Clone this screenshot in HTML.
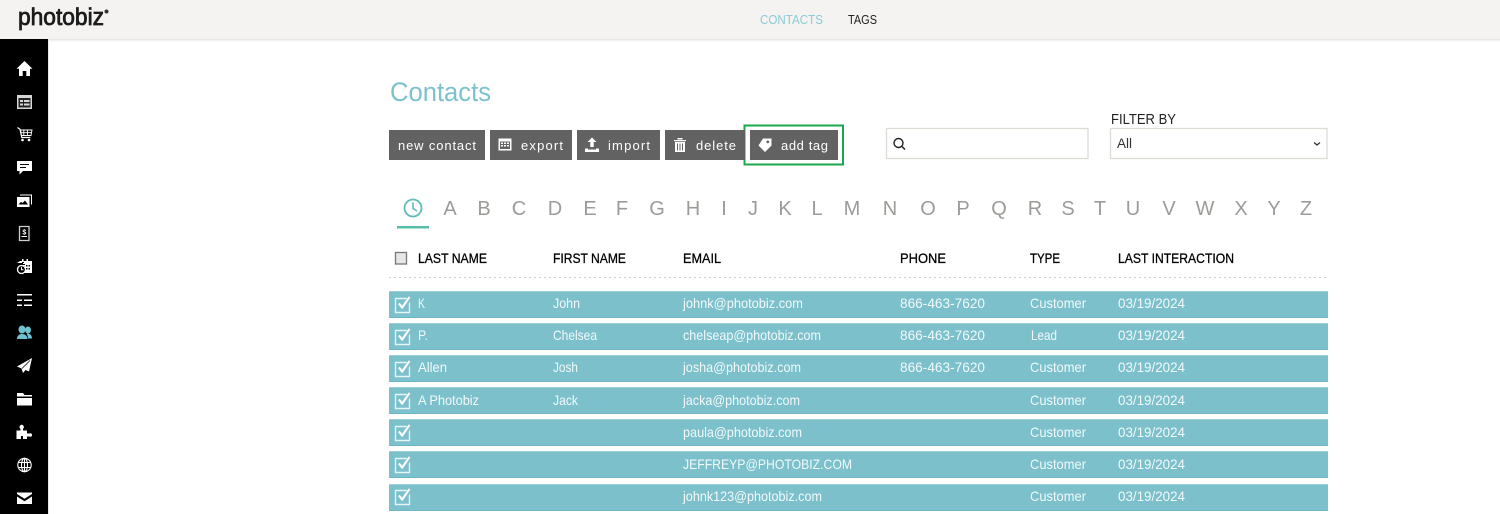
<!DOCTYPE html>
<html><head><meta charset="utf-8"><title>Contacts</title>
<style>
html,body{margin:0;padding:0;background:#fff;width:1500px;height:514px;overflow:hidden}
svg{display:block}
text{font-family:"Liberation Sans",sans-serif}
.r{font-size:13.8px;fill:#f2fafb}
.h{font-size:14.2px;fill:#000;stroke:#000;stroke-width:.3}
.b{font-size:13px;fill:#fff}
.a{font-size:20px;fill:#9b9b98;text-anchor:middle}
.i{fill:#fff}
.s{fill:none;stroke:#fff;stroke-width:1.4}
</style></head><body>
<svg width="1500" height="514" viewBox="0 0 1500 514" xmlns="http://www.w3.org/2000/svg">
<defs>
<linearGradient id="sh" x1="0" x2="0" y1="0" y2="1"><stop offset="0" stop-color="#e2e2e0"/><stop offset="1" stop-color="#fff"/></linearGradient>
<g id="ck"><path d="M409.500 302.500v10h-14v-14h11" fill="none" stroke="#e6f4f6" stroke-width="1.400"/><path d="M398.800 303.500l3.400 4 7.300-10.500" fill="none" stroke="#fff" stroke-width="2.200"/></g>
<g id="row"><rect x="389" y="291" width="939" height="27" fill="#7bc0cb"/><rect x="389" y="291" width="939" height="1" fill="#9bd0d8"/><rect x="389" y="317" width="939" height="1" fill="#70b6c2"/></g>
</defs>
<rect width="1500" height="39" fill="#f4f3f1"/>
<rect y="39" width="1500" height="3" fill="url(#sh)"/>
<rect y="39" width="48" height="475" fill="#000"/>
<rect x="48" y="39" width="1" height="475" fill="#e8e8e8"/>
<text x="18" y="25" font-size="24" fill="#1c1c1c" stroke="#1c1c1c" stroke-width=".8" textLength="86" lengthAdjust="spacingAndGlyphs">photobiz</text>
<circle cx="106.500" cy="11.500" r="2" fill="#333"/>
<text x="760" y="24" font-size="13" fill="#8acbd5" textLength="63" lengthAdjust="spacingAndGlyphs">CONTACTS</text>
<text x="848" y="24" font-size="13" fill="#222" textLength="29" lengthAdjust="spacingAndGlyphs">TAGS</text>

<!-- sidebar icons -->
<path class="i" d="M24.500 61l8 7.800h-2.500V76h-3.700v-5h-3.600v5H19v-7.200h-2.500z"/>
<path d="M17 95h15v14H17z" fill="#d8d8d8"/><path d="M18.500 98h12v9.500h-12z" fill="#222"/><path d="M20 100h3v2h-3zM20 103.500h3v2h-3zM24 100h5.500v2H24zM24 103.500h5.500v2H24z" fill="#d8d8d8"/>
<g fill="none" stroke="#fff"><path d="M17.500 127.500l2.500 1.800 1.800 8.200h8.500" stroke-width="1.200"/><path d="M20.500 130h11.500l-1 5.500h-9.500zM23.800 130v5.500M27.500 130v5.500M20.800 132.700h10.700" stroke-width=".9"/></g><circle class="i" cx="22.500" cy="140" r="1.300"/><circle class="i" cx="29" cy="140" r="1.300"/>
<path class="i" d="M17 161h15v10h-9l-3.500 3.500V171H17zM20 164v1h9v-1zM20 167v1h6v-1z" fill-rule="evenodd"/>
<path class="i" d="M20 194.500h12v10h-1v-9H20z"/><path class="i" d="M17 197h12.500v10H17zM18.500 204.500h9.500l-3-4-2.500 2.500-1.500-1.300z" fill-rule="evenodd"/>
<path d="M19.500 226.500h9.500v14h-9.500z" fill="none" stroke="#cfcfcf" stroke-width="1.300"/><text x="24.300" y="234.500" font-size="7" font-weight="700" fill="#fff" text-anchor="middle">$</text><path class="i" d="M21.500 236h5.500v1h-5.500z"/>
<path class="i" d="M20 261h2v-2h1.500v2h3v-2H28v2h4v12h-8v-1h-1v-2h1v-1h-2v-1h1v-1h2v-1h-2v-1h2v-1h-2v-1h1v-1h-2v1h-5z"/><path d="M26 265h1.500v1.500H26zM28.500 265H30v1.500h-1.500zM26 268h1.500v1.500H26zM28.500 268H30v1.500h-1.500z" fill="#000"/><circle cx="21.500" cy="269.500" r="4" fill="#000" stroke="#fff" stroke-width="1.300"/><path d="M21.500 267v2.700h2" stroke="#fff" fill="none"/>
<path class="i" d="M17 294h15v1.500H17zM17 299.500h5v1.500h-5zM24 299.500h8v1.500h-8zM17 304.500h5v1.500h-5zM24 304.500h8v1.500h-8z"/>
<ellipse cx="22" cy="329.500" rx="3.500" ry="4" fill="#6fc3d0"/><ellipse cx="28" cy="330" rx="3" ry="3.500" fill="#6fc3d0"/><path d="M17 339c0-3.800 2.500-5 5-5s5.500 1.200 5.500 5zM28 338.500c0-2-.5-3.300-1.500-4.700 3-.6 5.500 1 5.500 4.700z" fill="#6fc3d0"/>
<path class="i" d="M32 358L17 366.500l4.500 2L23 373l2.500-3 3.500 1.500z"/><path d="M30 360.500L22 368.500" stroke="#000" stroke-width=".8"/>
<path class="i" d="M17 393h6l1.500 2H32v1.500H17zM17 398h15v7.500H17z"/>
<circle class="i" cx="21.700" cy="427" r="2.200"/><circle class="i" cx="30.200" cy="435" r="1.800"/><path class="i" d="M20.500 428h2.500v2.500h4v3h2v3h-2v2.500h-4v-3h-2v3H16.500v-8.500h4z"/>
<g fill="none" stroke="#fff" stroke-width="1.100"><circle cx="24.500" cy="465" r="6.700"/><ellipse cx="24.500" cy="465" rx="3" ry="6.700"/><path d="M24.500 458v14M18 462.500h13M18 467.500h13"/></g>
<path class="i" d="M17 492.500h15v1.500l-7.500 4.800L17 494zM17 496.500l7.500 4.800 7.500-4.800v7.500H17z"/>

<text x="390" y="101" font-size="26.500" fill="#7cc2cd" textLength="101" lengthAdjust="spacingAndGlyphs">Contacts</text>

<!-- buttons -->
<rect x="744.500" y="125.500" width="98.500" height="39" fill="#fff" stroke="#1aa84b" stroke-width="2"/>
<g fill="#626262"><rect x="389" y="130" width="96" height="30"/><rect x="490" y="130" width="82" height="30"/><rect x="577" y="130" width="83" height="30"/><rect x="665" y="130" width="80" height="30"/><rect x="750" y="130" width="88" height="30"/></g>
<text class="b" x="398" y="150" textLength="78" lengthAdjust="spacing">new contact</text>
<text class="b" x="521" y="150" textLength="42" lengthAdjust="spacing">export</text>
<text class="b" x="608" y="150" textLength="42" lengthAdjust="spacing">import</text>
<text class="b" x="696" y="150" textLength="40" lengthAdjust="spacing">delete</text>
<text class="b" x="781" y="150" textLength="47" lengthAdjust="spacing">add tag</text>
<path class="i" d="M498.500 138.500h13v12h-13zM500 141.500v7.500h10v-7.500zM501 142.500h2v1.500h-2zM504 142.500h2v1.500h-2zM507 142.500h2v1.500h-2zM501 145h2v1.500h-2zM504 145h2v1.500h-2zM507 145h2v1.500h-2z" fill-rule="evenodd"/>
<path class="i" d="M592 137.500l4.500 4.500h-2.800v5h-3.400v-5h-2.800zM585 148.500h3v1h8v-1h3v3.500h-14z"/>
<path class="i" d="M674 140h12v1.300h-12zM677.500 138h5v1.500h-5zM675 142h10v10h-10zM677 143.500v7h1v-7zM679.500 143.500v7h1v-7zM682 143.500v7h1v-7z" fill-rule="evenodd"/>
<path class="i" d="M763 138.500h8.500v7l-6.500 6.500-6.500-6.500zM767.800 140.500a1.400 1.400 0 1 0 .01 0z" fill-rule="evenodd"/>

<!-- search/filter -->
<rect x="886.500" y="128.500" width="201.500" height="30" fill="#fff" stroke="#dcdcd7" stroke-width="1.300"/>
<circle cx="898.500" cy="143" r="4.500" fill="none" stroke="#222" stroke-width="1.400"/><path d="M902 146.500l3 3" stroke="#222" stroke-width="1.500"/>
<text x="1111" y="124" font-size="15" fill="#222" textLength="65" lengthAdjust="spacingAndGlyphs">FILTER BY</text>
<rect x="1110.500" y="128.500" width="216.500" height="30" fill="#fff" stroke="#dcdcd7" stroke-width="1.300"/>
<text x="1117" y="148" font-size="13.500" fill="#333" textLength="15" lengthAdjust="spacingAndGlyphs">All</text>
<path d="M1314 142.500l3 2.500 3-2.500" fill="none" stroke="#333" stroke-width="1.300"/>

<!-- alphabet -->
<circle cx="413" cy="208" r="8.500" fill="none" stroke="#5bbdb5" stroke-width="1.800"/><path d="M413 202.500v6l4 2.500" fill="none" stroke="#5bbdb5" stroke-width="1.600"/>
<rect x="397" y="226" width="32" height="2.500" fill="#56bfa9"/>
<g class="a">
<text class="a" x="450" y="215">A</text><text class="a" x="484" y="215">B</text><text class="a" x="519" y="215">C</text><text class="a" x="555" y="215">D</text><text class="a" x="590" y="215">E</text><text class="a" x="622" y="215">F</text><text class="a" x="657" y="215">G</text><text class="a" x="693" y="215">H</text><text class="a" x="724" y="215">I</text><text class="a" x="753" y="215">J</text><text class="a" x="785" y="215">K</text><text class="a" x="817" y="215">L</text><text class="a" x="852" y="215">M</text><text class="a" x="890" y="215">N</text><text class="a" x="928" y="215">O</text><text class="a" x="963" y="215">P</text><text class="a" x="999" y="215">Q</text><text class="a" x="1035" y="215">R</text><text class="a" x="1068" y="215">S</text><text class="a" x="1100" y="215">T</text><text class="a" x="1133" y="215">U</text><text class="a" x="1169" y="215">V</text><text class="a" x="1205" y="215">W</text><text class="a" x="1241" y="215">X</text><text class="a" x="1274" y="215">Y</text><text class="a" x="1306" y="215">Z</text>
</g>

<!-- header -->
<rect x="395.500" y="252.500" width="11" height="11.500" fill="#e6e6e6" stroke="#777" stroke-width="1.300"/>
<text class="h" x="418" y="263" textLength="69" lengthAdjust="spacingAndGlyphs">LAST NAME</text>
<text class="h" x="553" y="263" textLength="73" lengthAdjust="spacingAndGlyphs">FIRST NAME</text>
<text class="h" x="683" y="263" textLength="38" lengthAdjust="spacingAndGlyphs">EMAIL</text>
<text class="h" x="900" y="263" textLength="46" lengthAdjust="spacingAndGlyphs">PHONE</text>
<text class="h" x="1030" y="263" textLength="30" lengthAdjust="spacingAndGlyphs">TYPE</text>
<text class="h" x="1118" y="263" textLength="116" lengthAdjust="spacingAndGlyphs">LAST INTERACTION</text>
<path d="M389 277.500H1328" stroke="#cfcfcf" stroke-dasharray="2 3"/>

<!-- rows -->
<use href="#row"/><use href="#row" y="32"/><use href="#row" y="64"/><use href="#row" y="96"/><use href="#row" y="128"/><use href="#row" y="160"/><use href="#row" y="193"/>
<use href="#ck"/><use href="#ck" y="32"/><use href="#ck" y="64"/><use href="#ck" y="96"/><use href="#ck" y="128"/><use href="#ck" y="160"/><use href="#ck" y="192"/>

<text class="r" x="418" y="308" textLength="7" lengthAdjust="spacingAndGlyphs">K</text>
<text class="r" x="553" y="308" textLength="27" lengthAdjust="spacingAndGlyphs">John</text>
<text class="r" x="683" y="308" textLength="120" lengthAdjust="spacingAndGlyphs">johnk@photobiz.com</text>
<text class="r" x="900" y="308" textLength="85" lengthAdjust="spacingAndGlyphs">866-463-7620</text>
<text class="r" x="1030" y="308" textLength="56" lengthAdjust="spacingAndGlyphs">Customer</text>
<text class="r" x="1118" y="308" textLength="67" lengthAdjust="spacingAndGlyphs">03/19/2024</text>

<text class="r" x="418" y="340" textLength="10" lengthAdjust="spacingAndGlyphs">P.</text>
<text class="r" x="553" y="340" textLength="44" lengthAdjust="spacingAndGlyphs">Chelsea</text>
<text class="r" x="683" y="340" textLength="138" lengthAdjust="spacingAndGlyphs">chelseap@photobiz.com</text>
<text class="r" x="900" y="340" textLength="85" lengthAdjust="spacingAndGlyphs">866-463-7620</text>
<text class="r" x="1031" y="340" textLength="26" lengthAdjust="spacingAndGlyphs">Lead</text>
<text class="r" x="1118" y="340" textLength="67" lengthAdjust="spacingAndGlyphs">03/19/2024</text>

<text class="r" x="418" y="372" textLength="29" lengthAdjust="spacingAndGlyphs">Allen</text>
<text class="r" x="553" y="372" textLength="25" lengthAdjust="spacingAndGlyphs">Josh</text>
<text class="r" x="683" y="372" textLength="118" lengthAdjust="spacingAndGlyphs">josha@photobiz.com</text>
<text class="r" x="900" y="372" textLength="85" lengthAdjust="spacingAndGlyphs">866-463-7620</text>
<text class="r" x="1030" y="372" textLength="56" lengthAdjust="spacingAndGlyphs">Customer</text>
<text class="r" x="1118" y="372" textLength="67" lengthAdjust="spacingAndGlyphs">03/19/2024</text>

<text class="r" x="418" y="405" textLength="61" lengthAdjust="spacingAndGlyphs">A Photobiz</text>
<text class="r" x="553" y="405" textLength="25" lengthAdjust="spacingAndGlyphs">Jack</text>
<text class="r" x="683" y="405" textLength="117" lengthAdjust="spacingAndGlyphs">jacka@photobiz.com</text>
<text class="r" x="1030" y="405" textLength="56" lengthAdjust="spacingAndGlyphs">Customer</text>
<text class="r" x="1118" y="405" textLength="67" lengthAdjust="spacingAndGlyphs">03/19/2024</text>

<text class="r" x="683" y="437" textLength="119" lengthAdjust="spacingAndGlyphs">paula@photobiz.com</text>
<text class="r" x="1030" y="437" textLength="56" lengthAdjust="spacingAndGlyphs">Customer</text>
<text class="r" x="1118" y="437" textLength="67" lengthAdjust="spacingAndGlyphs">03/19/2024</text>

<text class="r" x="683" y="469" textLength="169" lengthAdjust="spacingAndGlyphs">JEFFREYP@PHOTOBIZ.COM</text>
<text class="r" x="1030" y="469" textLength="56" lengthAdjust="spacingAndGlyphs">Customer</text>
<text class="r" x="1118" y="469" textLength="67" lengthAdjust="spacingAndGlyphs">03/19/2024</text>

<text class="r" x="683" y="501" textLength="139" lengthAdjust="spacingAndGlyphs">johnk123@photobiz.com</text>
<text class="r" x="1030" y="501" textLength="56" lengthAdjust="spacingAndGlyphs">Customer</text>
<text class="r" x="1118" y="501" textLength="67" lengthAdjust="spacingAndGlyphs">03/19/2024</text>
</svg>
</body></html>
